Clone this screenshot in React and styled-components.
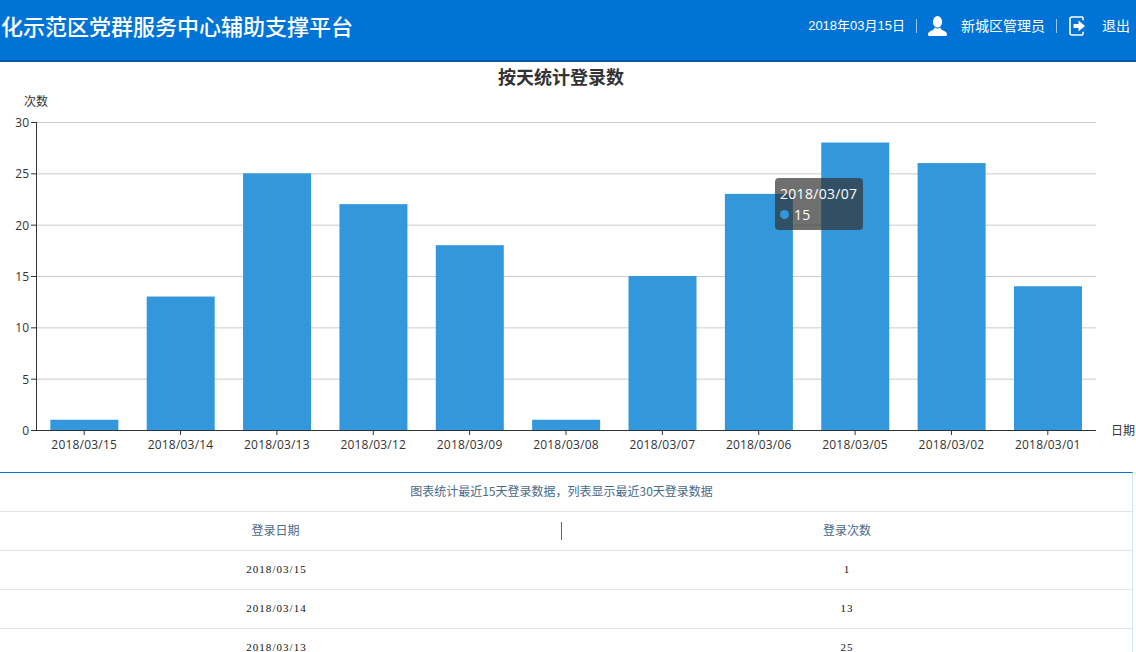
import React from "react";
import styled, { createGlobalStyle } from "styled-components";

const GlobalStyle = createGlobalStyle`
  html, body {
    margin: 0;
    height: 652px;
    overflow: hidden;
    background: #fff;
    font-family: "Noto Sans CJK SC", sans-serif;
  }
`;

const Header = styled.header`
  display: flex;
  justify-content: space-between;
  align-items: center;
  box-sizing: border-box;
  height: 62px;
  padding: 0 6px 8px 1px;
  background: #0073d6;
  border-bottom: 2px solid #00559f;
  color: #fff;
`;

const Brand = styled.h1`
  margin: -2px 0 0;
  font-size: 22px;
  font-weight: 500;
  line-height: 30px;
`;

const UserBar = styled.div`
  display: flex;
  align-items: center;
  font-size: 14px;
  line-height: 20px;
`;

const DateText = styled.span`
  font-family: "Liberation Sans", "Noto Sans CJK SC", sans-serif;
  font-size: 13px;
`;

const Label = styled.span`
  margin-top: -2px;
`;

const Sep = styled.i`
  width: 1px;
  height: 14px;
  margin: 0 ${(p) => p.$right}px 0 ${(p) => p.$left}px;
  background: #9cc8ee;
`;

const IconSlot = styled.span`
  display: flex;
  margin-right: ${(p) => p.$gap}px;
`;

const ChartTitle = styled.h2`
  margin: 0;
  height: 30px;
  padding-right: 14px;
  text-align: center;
  font-size: 18px;
  font-weight: 700;
  line-height: 28px;
  color: #333;
`;

const ChartWrap = styled.section`
  position: relative;
  height: 380px;
`;

const ChartSvg = styled.svg`
  display: block;
  font-family: "Open Sans", "Noto Sans CJK SC", sans-serif;
  font-size: 12px;
  fill: #333;
`;

const AxisDate = styled.text`
  letter-spacing: 0.2px;
`;

const Tooltip = styled.div`
  position: absolute;
  left: 775px;
  top: 86px;
  box-sizing: border-box;
  width: 88px;
  height: 52px;
  padding: 5px;
  border-radius: 4px;
  background: rgba(50, 50, 50, 0.7);
  color: #fff;
  font-family: "Open Sans", sans-serif;
  font-size: 14px;
  letter-spacing: 0.3px;
  line-height: 21px;
  white-space: nowrap;
`;

const TipValue = styled.div`
  display: flex;
  align-items: center;
  gap: 5px;
`;

const Dot = styled.span`
  width: 9px;
  height: 9px;
  border-radius: 50%;
  background: #3398db;
`;

const Table = styled.div`
  width: 1133px;
  box-sizing: border-box;
  border-top: 1px solid #0073d6;
  border-right: 1px solid #d5e3ef;
`;

const Caption = styled.div`
  height: 39px;
  box-sizing: border-box;
  border-bottom: 1px solid #dde6ec;
  padding-right: 9px;
  text-align: center;
  font-size: 12px;
  line-height: 35px;
  color: #4a6a8a;
`;

const Row = styled.div`
  display: grid;
  grid-template-columns: 561px 1fr;
  height: 39px;
  box-sizing: border-box;
  border-bottom: 1px solid #dde6ec;
  align-items: center;
  text-align: center;
`;

const HeadCell = styled.div`
  height: 18px;
  font-size: 12px;
  line-height: 16px;
  color: #4a6a8a;
  ${(p) => (p.$divided ? "border-left: 1px solid #4a6a8a;" : "padding-right: 10px;")}
`;

const Cell = styled.div`
  margin-top: -2px;
  font-family: "Liberation Serif", serif;
  font-size: 11px;
  letter-spacing: 1.05px;
  color: #111;
  ${(p) => (p.$first ? "padding-right: 8px;" : "padding-left: 1px;")}
`;

const X0 = 36;
const X1 = 1096;
const Y_TOP = 30;
const Y_BASE = 338;

const data = [
  ["2018/03/15", 1],
  ["2018/03/14", 13],
  ["2018/03/13", 25],
  ["2018/03/12", 22],
  ["2018/03/09", 18],
  ["2018/03/08", 1],
  ["2018/03/07", 15],
  ["2018/03/06", 23],
  ["2018/03/05", 28],
  ["2018/03/02", 26],
  ["2018/03/01", 14],
];

const rows = data.slice(0, 3);
const band = (X1 - X0) / data.length;
const yOf = (v) => Y_BASE - (v / 30) * (Y_BASE - Y_TOP);

function BarChart() {
  return (
    <ChartSvg width="1136" height="380" viewBox="0 0 1136 380">
      <text x="24" y="14">次数</text>
      <text x="1111" y={Y_BASE + 5}>日期</text>

      {[0, 5, 10, 15, 20, 25, 30].map((v) => (
        <g key={v}>
          {v > 0 && <line x1={X0} x2={X1} y1={yOf(v) + 0.5} y2={yOf(v) + 0.5} stroke="#ccc" />}
          <line x1={X0 - 5} x2={X0} y1={yOf(v) + 0.5} y2={yOf(v) + 0.5} stroke="#333" />
          <text x={X0 - 7} y={yOf(v) + 5} textAnchor="end">{v}</text>
        </g>
      ))}

      {data.map(([day, v], i) => {
        const cx = X0 + band * (i + 0.5);
        return (
          <g key={day}>
            <rect x={cx - 33.85} y={yOf(v)} width="68" height={Y_BASE - yOf(v)} fill="#3398db" />
            <line x1={cx} x2={cx} y1={Y_BASE} y2={Y_BASE + 5} stroke="#333" />
            <AxisDate x={cx} y={Y_BASE + 19} textAnchor="middle">{day}</AxisDate>
          </g>
        );
      })}

      <line x1={X0 + 0.5} x2={X0 + 0.5} y1={Y_TOP} y2={Y_BASE} stroke="#333" />
      <line x1={X0} x2={X1} y1={Y_BASE + 0.5} y2={Y_BASE + 0.5} stroke="#333" />
    </ChartSvg>
  );
}

function UserIcon() {
  return (
    <svg width="19" height="20" viewBox="0 0 19 20" fill="#fff">
      <ellipse cx="9.5" cy="5.8" rx="4.6" ry="5.8" />
      <path d="M6.6 11.5c-.2 1.6-1.4 2.5-3.4 3.3C1.3 15.6.4 16.5 0 18c-.2 1 .5 2 1.7 2h15.6c1.2 0 1.9-1 1.7-2-.4-1.5-1.3-2.4-3.2-3.2-2-.8-3.2-1.7-3.4-3.3-.8.7-1.8 1.1-2.9 1.1s-2.1-.4-2.9-1.1z" />
    </svg>
  );
}

function ExitIcon() {
  return (
    <svg width="17" height="20" viewBox="0 0 17 20" fill="none">
      <path d="M14 1H3a2 2 0 0 0-2 2v14a2 2 0 0 0 2 2h11" stroke="#fff" strokeWidth="1.6" />
      <path d="M14 1.2v3M14 15.800v3" stroke="#fff" strokeWidth="1.6" />
      <path d="M4.500 8h5V4.500L16 10l-6.500 5.500V12h-5z" fill="#fff" />
    </svg>
  );
}

export default function App() {
  return (
    <>
      <GlobalStyle />
      <Header>
        <Brand>化示范区党群服务中心辅助支撑平台</Brand>
        <UserBar>
          <DateText>2018年03月15日</DateText>
          <Sep $left={11} $right={11} />
          <IconSlot $gap={14}><UserIcon /></IconSlot>
          <Label>新城区管理员</Label>
          <Sep $left={11} $right={12} />
          <IconSlot $gap={16}><ExitIcon /></IconSlot>
          <Label>退出</Label>
        </UserBar>
      </Header>

      <ChartTitle>按天统计登录数</ChartTitle>
      <ChartWrap>
        <BarChart />
        <Tooltip>
          2018/03/07
          <TipValue><Dot />15</TipValue>
        </Tooltip>
      </ChartWrap>

      <Table>
        <Caption>图表统计最近15天登录数据，列表显示最近30天登录数据</Caption>
        <Row>
          <HeadCell>登录日期</HeadCell>
          <HeadCell $divided>登录次数</HeadCell>
        </Row>
        {rows.map(([day, v]) => (
          <Row key={day}>
            <Cell $first>{day}</Cell>
            <Cell>{v}</Cell>
          </Row>
        ))}
      </Table>
    </>
  );
}
